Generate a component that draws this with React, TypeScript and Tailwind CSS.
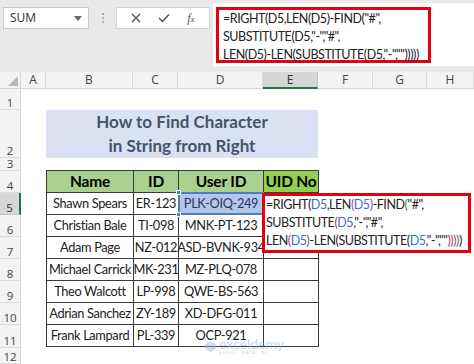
import React from "react";

const rows = [
  ["Shawn Spears", "ER-123", "PLK-OIQ-249"],
  ["Christian Bale", "TI-098", "MNK-PT-123"],
  ["Adam Page", "NZ-012", "ASD-BVNK-934"],
  ["Michael Carrick", "MK-231", "MZ-PLQ-078"],
  ["Theo Walcott", "LP-998", "QWE-BS-563"],
  ["Adrian Sanchez", "ZY-189", "XD-DFG-011"],
  ["Frank Lampard", "PL-339", "OCP-921"],
];

const B = "text-[#3b6fc6]";
const P1 = "text-[#8e44ad]";
const P2 = "text-[#2e8b3e]";
const P3 = "text-[#c0392b]";

function ColoredFormula() {
  return (
    <>
      <div className="whitespace-nowrap">
        =RIGHT(<span className={B}>D5</span>,LEN<span className={P1}>(</span>
        <span className={B}>D5</span>
        <span className={P1}>)</span>-FIND<span className={P2}>(</span>"#",
      </div>
      <div className="whitespace-nowrap">
        SUBSTITUTE<span className={P3}>(</span>
        <span className={B}>D5</span>,"-","#",
      </div>
      <div className="whitespace-nowrap">
        LEN<span className={P1}>(</span>
        <span className={B}>D5</span>
        <span className={P1}>)</span>-LEN(SUBSTITUTE(<span className={B}>D5</span>,"-",""
        <span className="text-[#c0392b]">)</span>
        <span className="text-[#8e44ad]">)</span>
        <span className="text-[#c0392b]">)</span>
        <span className="text-[#2e8b3e]">)</span>
        <span>)</span>
      </div>
    </>
  );
}

const cell = "bg-white flex items-center justify-center text-[12.8px] tracking-[-0.35px] text-[#222] whitespace-nowrap";
const head = "flex items-center justify-center text-[15.5px] tracking-[-0.2px] font-bold text-black whitespace-nowrap";

export default function App() {
  const rowLabels = ["1", "2", "3", "4", "5", "6", "7", "8", "9", "10", "11", "12"];
  const cols = ["A", "B", "C", "D", "E", "F", "G", "H"];
  return (
    <div className="relative w-[474px] h-[364px] overflow-hidden bg-white font-['Lato',sans-serif]">
      {/* Formula bar area */}
      <div className="h-[72px] bg-[#e9e9e9] flex items-start">
        <div className="ml-[3px] mt-[7px] w-[86px] h-[22px] bg-white border border-[#c8c8c8] flex items-center justify-between pl-[6px] pr-[6px]">
          <span className="text-[12px] text-[#333] font-['Open_Sans',sans-serif]">SUM</span>
          <svg width="8" height="5" viewBox="0 0 8 5">
            <path d="M0 0 L8 0 L4 5 Z" fill="#666" />
          </svg>
        </div>
        <div className="w-[27px] h-[22px] mt-[7px] flex justify-center items-center">
          <div className="flex flex-col gap-[2px]">
            <div className="w-[2px] h-[2px] bg-[#b0b0b0]" />
            <div className="w-[2px] h-[2px] bg-[#b0b0b0]" />
            <div className="w-[2px] h-[2px] bg-[#b0b0b0]" />
          </div>
        </div>
        <div className="mt-[7px] w-[94px] h-[22px] bg-white border border-[#d4d4d4] flex items-center justify-around px-[6px]">
          <svg width="10" height="10" viewBox="0 0 10 10">
            <path d="M1 1 L9 9 M9 1 L1 9" stroke="#555" strokeWidth="1.4" />
          </svg>
          <svg width="12" height="10" viewBox="0 0 12 10">
            <path d="M1 5 L4.5 8.5 L11 1.5" stroke="#555" strokeWidth="1.5" fill="none" />
          </svg>
          <span className="text-[12px] italic text-[#555] font-['Liberation_Serif',serif]">
            f<span className="text-[9px]">x</span>
          </span>
        </div>
        <div className="ml-[3px] mt-[3px] flex-1 h-[63px] bg-white">
          <div className="ml-[3px] mt-[4px] w-[215px] h-[56px] border-[3px] border-[#e3000f] pl-[4px] text-[12.5px] tracking-[-0.45px] leading-[18px] text-[#222]">
            <div className="whitespace-nowrap">=RIGHT(D5,LEN(D5)-FIND("#",</div>
            <div className="whitespace-nowrap">SUBSTITUTE(D5,"-","#",</div>
            <div className="whitespace-nowrap">LEN(D5)-LEN(SUBSTITUTE(D5,"-","")))))</div>
          </div>
        </div>
      </div>

      {/* Sheet grid */}
      <div className="grid grid-cols-[21px_25px_87px_45px_85px_55px_55px_54px_1fr] grid-rows-[17px_21px_48px_13px_22px_22px_22px_22px_22px_22px_22px_23px_1fr] h-[292px] font-['Open_Sans',sans-serif]">
        {/* corner */}
        <div className="col-start-1 row-start-1 bg-[#f3f3f3] border-r border-b border-[#d4d4d4] flex items-end justify-end p-[2px]">
          <svg width="10" height="10" viewBox="0 0 10 10">
            <path d="M10 0 L10 10 L0 10 Z" fill="#b9b9b9" />
          </svg>
        </div>
        {cols.map((c, i) => (
          <div
            key={c}
            className={
              "row-start-1 flex items-center justify-center text-[12px] border-r " +
              (c === "E"
                ? "bg-[#d6d6d6] border-[#c4c4c4] border-b-2 border-b-[#217346] text-[#333]"
                : "bg-[#f3f3f3] border-[#d9d9d9] border-b border-b-[#d4d4d4] text-[#444]")
            }
            style={{ gridColumnStart: i + 2 }}
          >
            {c}
          </div>
        ))}
        <div className="row-start-1 col-start-10 bg-[#f3f3f3] border-b border-[#d4d4d4]" />
        {rowLabels.map((r, i) => (
          <div
            key={r}
            className={
              "col-start-1 flex items-end justify-center text-[11.5px] leading-[11px] pb-[1px] border-b " +
              (r === "5"
                ? "bg-[#d6d6d6] border-[#c4c4c4] border-r-2 border-r-[#217346] text-[#333]"
                : "bg-[#f3f3f3] border-[#dcdcdc] border-r border-r-[#d4d4d4] text-[#444]")
            }
            style={{ gridRowStart: i + 2 }}
          >
            {r}
          </div>
        ))}
        <div className="col-start-1 row-start-[14] bg-[#f3f3f3] border-r border-[#d4d4d4]" />

        {/* Title */}
        <div className="col-start-3 col-span-4 row-start-3 bg-[#d9e1f2] flex flex-col items-center justify-center text-[17px] leading-[24px] font-bold text-[#44546a] font-['Lato',sans-serif]">
          <div>How to Find Character</div>
          <div>in String from Right</div>
        </div>

        {/* Table */}
        <div className="col-start-3 col-span-4 row-start-5 row-span-8 self-start w-[273px] h-[177px] -mt-px grid grid-cols-[86px_44px_84px_54px] grid-rows-[repeat(8,21px)] gap-px p-px bg-[#3a3a3a] font-['Lato',sans-serif]">
          <div className={head + " bg-[#a9d08e]"}>Name</div>
          <div className={head + " bg-[#a9d08e]"}>ID</div>
          <div className={head + " bg-[#a9d08e]"}>User ID</div>
          <div className={head + " bg-[#92d050]"}>UID No</div>
          {rows.map((r, i) => (
            <React.Fragment key={i}>
              <div className={cell}>{r[0]}</div>
              <div className={cell}>{r[1]}</div>
              {i === 0 ? (
                <div className="relative bg-[#b4c6e7] flex items-center justify-center text-[12.8px] tracking-[-0.35px] text-[#1f3864] whitespace-nowrap">
                  {r[2]}
                  <div className="absolute -inset-[1px] border-2 border-[#4f7cc4]" />
                  <div className="absolute -left-[3px] -top-[3px] w-[5px] h-[5px] bg-[#4f7cc4] border border-white" />
                  <div className="absolute -left-[3px] -bottom-[3px] w-[5px] h-[5px] bg-[#4f7cc4] border border-white" />
                </div>
              ) : (
                <div className={cell}>{r[2]}</div>
              )}
              <div className="bg-white" />
            </React.Fragment>
          ))}
        </div>
      </div>

      {/* Formula overlay on E5 */}
      <div className="absolute left-[262px] top-[193px] w-[209px] h-[60px] border-[3px] border-[#e3000f] bg-white pl-[1px] text-[12.5px] tracking-[-0.45px] leading-[18px] text-[#222]">
        <ColoredFormula />
      </div>

      {/* Watermark */}
      <div className="absolute left-[204px] top-[337px] flex items-center gap-[2px] opacity-50 pointer-events-none">
        <svg width="13" height="13" viewBox="0 0 14 14">
          <path d="M7 1 L13 4.5 L13 9.5 L7 13 L1 9.5 L1 4.5 Z" fill="#9db6d8" />
        </svg>
        <div className="flex flex-col leading-none">
          <span className="text-[14px] text-[#8fb0da] font-['Lato',sans-serif]">exceldemy</span>
          <span className="text-[4px] text-[#a0a0a0] tracking-[1px]">EXCEL · DATA · BI</span>
        </div>
      </div>
    </div>
  );
}
